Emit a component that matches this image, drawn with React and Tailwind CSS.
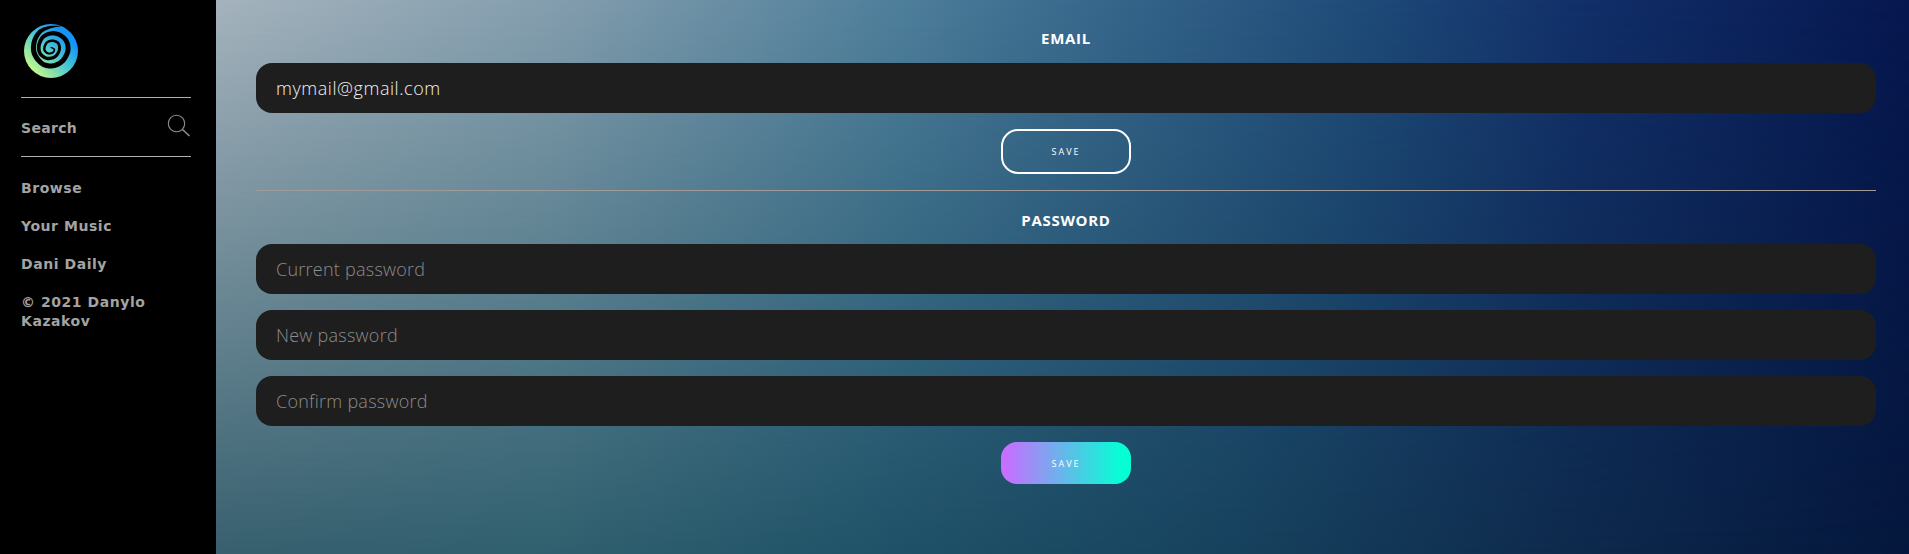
// centre line of the logo's spiral, traced off the reference: [x, y, width]
const SPIRAL = [
  [61.7, 26, 0.2], [50, 27.3, 2.6], [40, 31.7, 4.4], [34.3, 41.7, 5], [34.3, 53.3, 5.2], [41.7, 63.3, 5],
  [51.7, 66, 5], [61.7, 61.7, 5], [67.7, 51.7, 5], [66.7, 41.7, 4.8], [60, 35, 4.5], [51.7, 33.3, 4.2],
  [43.3, 36.7, 4], [39, 45, 3.8], [40, 53.3, 3.6], [46.7, 58.3, 3.4], [55, 56.7, 3.2], [59.3, 50, 3],
  [58.3, 43.3, 2.8], [52.7, 40.7, 2.6], [46.7, 42.7, 2.4], [44.3, 49.3, 2.4], [47.7, 53.3, 2.2],
  [52.7, 52.7, 2], [54.3, 49.3, 1.6], [50.7, 47.3, 1],
];

function spiralPath() {
  const n = SPIRAL.length;
  const line = [];
  for (let i = 0; i < n - 1; i++) {
    const a = SPIRAL[Math.max(i - 1, 0)], b = SPIRAL[i], c = SPIRAL[i + 1], d = SPIRAL[Math.min(i + 2, n - 1)];
    for (let s = 0; s < 8; s++) {
      const t = s / 8, t2 = t * t, t3 = t2 * t;
      const p = [0, 1].map((k) => 0.5 * (2 * b[k] + (c[k] - a[k]) * t + (2 * a[k] - 5 * b[k] + 4 * c[k] - d[k]) * t2 + (3 * b[k] - a[k] - 3 * c[k] + d[k]) * t3));
      line.push([p[0], p[1], b[2] + (c[2] - b[2]) * t]);
    }
  }
  line.push(SPIRAL[n - 1]);
  const left = [], right = [];
  line.forEach((p, i) => {
    const q = line[Math.min(i + 1, line.length - 1)], o = line[Math.max(i - 1, 0)];
    const dx = q[0] - o[0], dy = q[1] - o[1], len = Math.hypot(dx, dy) || 1;
    const nx = (-dy / len) * p[2] / 2, ny = (dx / len) * p[2] / 2;
    left.push([p[0] + nx, p[1] + ny]);
    right.push([p[0] - nx, p[1] - ny]);
  });
  return 'M' + left.concat(right.reverse()).map((p) => p[0].toFixed(2) + ' ' + p[1].toFixed(2)).join('L') + 'Z';
}

function Logo() {
  return (
    <svg width="54" height="54" viewBox="24 24 54 54" className="block">
      <defs>
        <linearGradient id="logoGrad" x1="0.1" y1="0.9" x2="0.9" y2="0.1">
          <stop offset="0.05" stopColor="#c4fb87" />
          <stop offset="0.5" stopColor="#4cc8d0" />
          <stop offset="0.85" stopColor="#1294f8" />
        </linearGradient>
      </defs>
      <circle cx="51" cy="51" r="27" fill="url(#logoGrad)" />
      <path d={spiralPath()} fill="#000" />
    </svg>
  );
}

function NavItem({ children }) {
  return <a className="block text-[14px] leading-[19px] font-bold tracking-[0.55px] text-[#a3a3a3] mb-[19px]">{children}</a>;
}

function Sidebar() {
  return (
    <aside className="w-[216px] shrink-0 bg-black pl-[21px] pr-[25px] pt-[24px] font-['DejaVu_Sans',sans-serif]">
      <div className="pl-[3px] pb-[19px] border-b border-[#b0b0b0]">
        <Logo />
      </div>
      <div className="h-[59px] flex items-center justify-between border-b border-[#b0b0b0]">
        <span className="pt-[3px] text-[14px] font-bold tracking-[0.3px] text-[#a3a3a3]">Search</span>
        <svg width="24" height="24" viewBox="0 0 24 24" fill="none" stroke="#8f8f8f" className="-mt-[2px]">
          <circle cx="9.5" cy="9.5" r="8.2" strokeWidth="1.1" />
          <path d="M15.5 15.5 L22.5 22" strokeWidth="1.6" />
        </svg>
      </div>
      <nav className="pt-[22px]">
        <NavItem>Browse</NavItem>
        <NavItem>Your Music</NavItem>
        <NavItem>Dani Daily</NavItem>
        <NavItem>© 2021 Danylo Kazakov</NavItem>
      </nav>
    </aside>
  );
}

function Field({ value, placeholder }) {
  return (
    <input
      readOnly
      value={value}
      placeholder={placeholder}
      className="block w-full h-[50px] rounded-[16px] bg-[#1e1e1e] px-[20px] text-[18px] font-light tracking-[0.55px] placeholder:tracking-[0.25px] text-[#f0f0f0] placeholder:text-[#8c8c8c] outline-none font-['Open_Sans',sans-serif]"
    />
  );
}

function SectionLabel({ children }) {
  return <h2 className="text-center text-[15px] leading-[20px] font-bold tracking-[0.7px] text-white">{children}</h2>;
}

export default function App() {
  return (
    <div className="flex h-[554px] w-full overflow-hidden">
      <Sidebar />
      <main className="relative flex-1 font-['Open_Sans',sans-serif] bg-[linear-gradient(to_right,#38606f_0%,#30606f_20%,#1f5268_40%,#17425e_60%,#0e2a4d_80%,#05173d_100%)] before:absolute before:inset-0 before:bg-[linear-gradient(to_right,#a5b3bd_0%,#849eae_20%,#4f7f9b_40%,#3b6b8e_50%,#1e4a78_68%,#12306a_80%,#06174f_100%)] before:[mask-image:linear-gradient(to_bottom,#000,transparent)]">
        <div className="relative pl-[40px] pr-[33px] pt-[28px]">
          <SectionLabel>EMAIL</SectionLabel>
          <div className="mt-[15px]">
            <Field value="mymail@gmail.com" />
          </div>
          <button className="block mx-auto mt-[16px] w-[130px] h-[45px] rounded-[17px] border-2 border-white text-[9px] font-medium tracking-[2px] text-white">
            SAVE
          </button>
          <div className="mt-[16px] border-t border-[#a09a98]" />
          <div className="mt-[19px]">
            <SectionLabel>PASSWORD</SectionLabel>
          </div>
          <div className="mt-[14px] flex flex-col gap-[16px]">
            <Field placeholder="Current password" />
            <Field placeholder="New password" />
            <Field placeholder="Confirm password" />
          </div>
          <button className="block mx-auto mt-[16px] pt-[1px] w-[130px] h-[42px] rounded-[16px] bg-[linear-gradient(to_right,#c471ff_5%,#05ffd5_92%)] text-[9px] font-medium tracking-[2px] text-white">
            SAVE
          </button>
        </div>
      </main>
    </div>
  );
}
